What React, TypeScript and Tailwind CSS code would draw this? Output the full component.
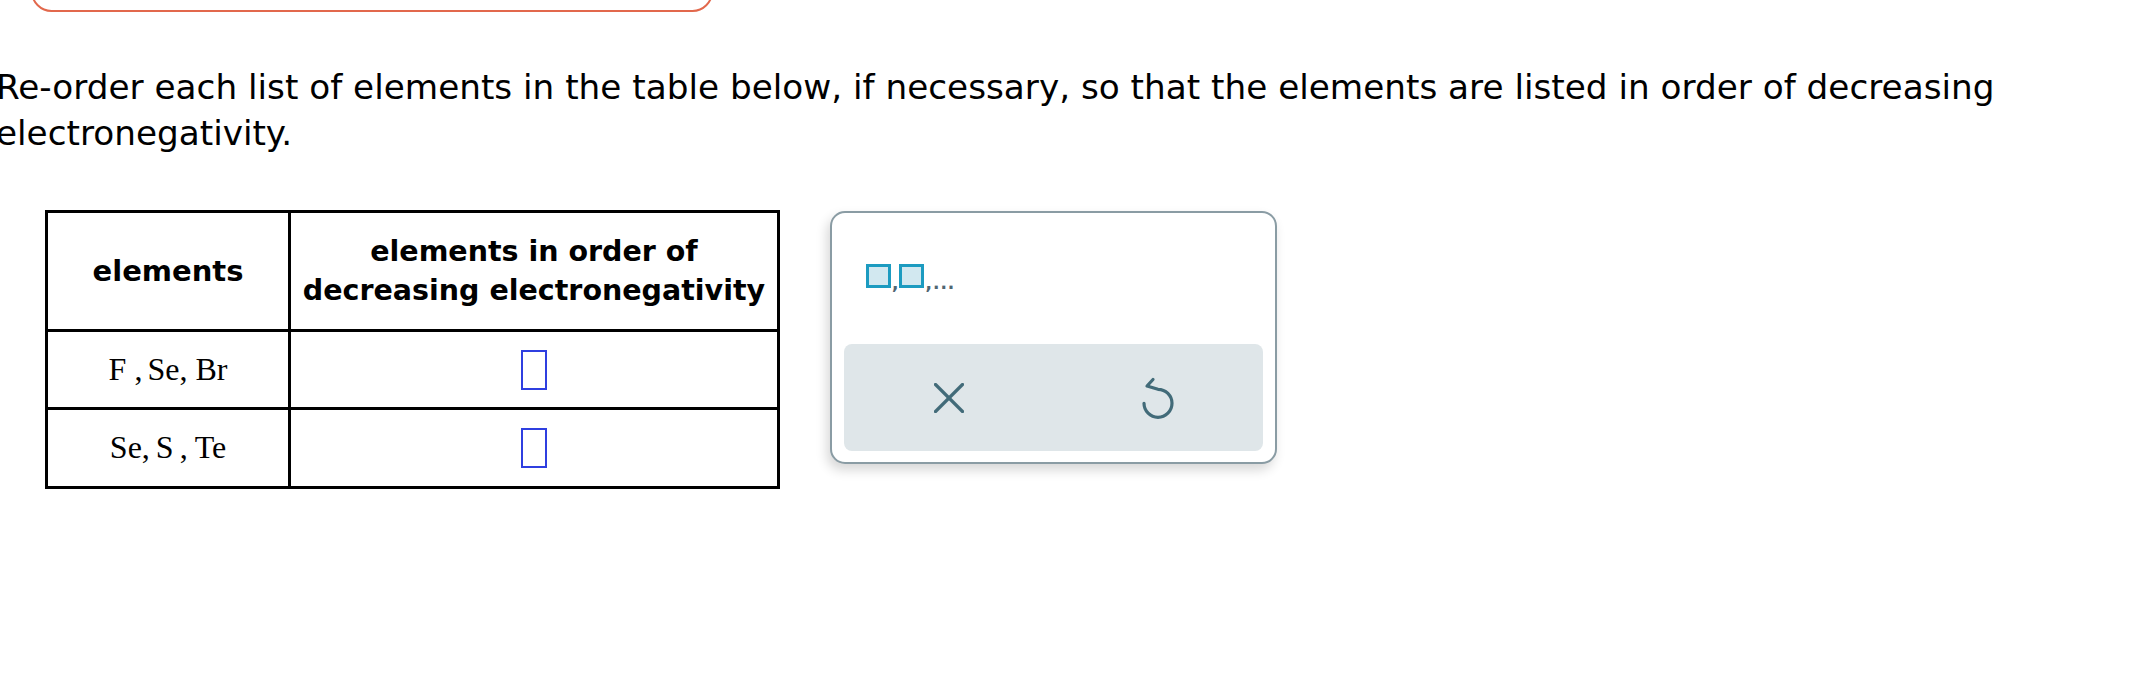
export default function App() {
  return (
    <div className="h-[697px] w-[2151px] overflow-hidden bg-white text-black">
      <div className="ml-[31px] mt-[-29px] h-[41px] w-[682px] rounded-[22px] border-2 border-[#e2684c]" />
      <p className="ml-[-4px] mt-[52px] w-[2080px] font-['DejaVu_Sans',sans-serif] text-[34.25px] leading-[46px]">
        Re-order each list of elements in the table below, if necessary, so that the elements are listed in order of decreasing electronegativity.
      </p>
      <div className="ml-[45px] mt-[54px] flex items-start gap-[50px]">
        <div className="grid w-[735px] grid-cols-[240px_486px] grid-rows-[116px_75px_76px] gap-[3px] bg-black p-[3px]">
          <div className="flex items-center justify-center bg-white font-['DejaVu_Sans',sans-serif] text-[29px] font-bold leading-[39px]">
            elements
          </div>
          <div className="flex items-center justify-center bg-white text-center font-['DejaVu_Sans',sans-serif] text-[28.5px] font-bold leading-[39px]">
            <span>
              elements in order of
              <br />
              decreasing electronegativity
            </span>
          </div>
          <div className="flex items-center justify-center bg-white pb-[2px] font-['Liberation_Serif',serif] text-[32px] leading-none">
            <span>F</span>
            <span className="ml-[8px]">,</span>
            <span className="ml-[5px]">Se</span>
            <span>,</span>
            <span className="ml-[8px]">Br</span>
          </div>
          <div className="flex items-center justify-center bg-white">
            <div className="h-[40px] w-[26px] border-2 border-[#2f3fe0]" />
          </div>
          <div className="flex items-center justify-center bg-white pb-[2px] font-['Liberation_Serif',serif] text-[32px] leading-none">
            <span>Se</span>
            <span>,</span>
            <span className="ml-[6px]">S</span>
            <span className="ml-[6px]">,</span>
            <span className="ml-[7px]">Te</span>
          </div>
          <div className="flex items-center justify-center bg-white">
            <div className="h-[40px] w-[26px] border-2 border-[#2f3fe0]" />
          </div>
        </div>

        <div className="mt-[1px] flex h-[253px] w-[447px] flex-col rounded-[15px] border-2 border-[#8a9ca4] bg-white shadow-[-3px_6px_12px_rgba(0,0,0,0.16)]">
          <div className="flex-1 pl-[34px] pt-[51px]">
            <div className="flex items-end font-['DejaVu_Sans',sans-serif] text-[17px] font-bold leading-none text-[#4f6672]">
              <div className="h-[24px] w-[25px] border-[3px] border-[#1c9bc0] bg-[#d2e8f0]" />
              <span className="mb-[-4px] ml-[1px] mr-[1px]">,</span>
              <div className="h-[24px] w-[25px] border-[3px] border-[#1c9bc0] bg-[#d2e8f0]" />
              <span className="mb-[-4px] ml-[1px] tracking-[1px]">,...</span>
            </div>
          </div>
          <div className="mx-[12px] mb-[11px] flex h-[107px] rounded-[8px] bg-[#dfe6e9]">
            <button className="flex flex-1 items-center justify-center">
              <svg width="30" height="30" viewBox="0 0 30 30" fill="none" stroke="#426b79" strokeWidth="3.2" strokeLinecap="round">
                <line x1="1.5" y1="1.5" x2="28.5" y2="28.5" />
                <line x1="28.5" y1="1.5" x2="1.5" y2="28.5" />
              </svg>
            </button>
            <button className="flex flex-1 items-center justify-center">
              <svg width="56" height="56" viewBox="0 0 56 56" fill="none" stroke="#426b79" strokeWidth="3.2" strokeLinecap="round" strokeLinejoin="round">
                <path d="M23 9.5 L17 16 L28 19.3 A14 14 0 1 1 14 33.3" />
              </svg>
            </button>
          </div>
        </div>
      </div>
    </div>
  );
}
